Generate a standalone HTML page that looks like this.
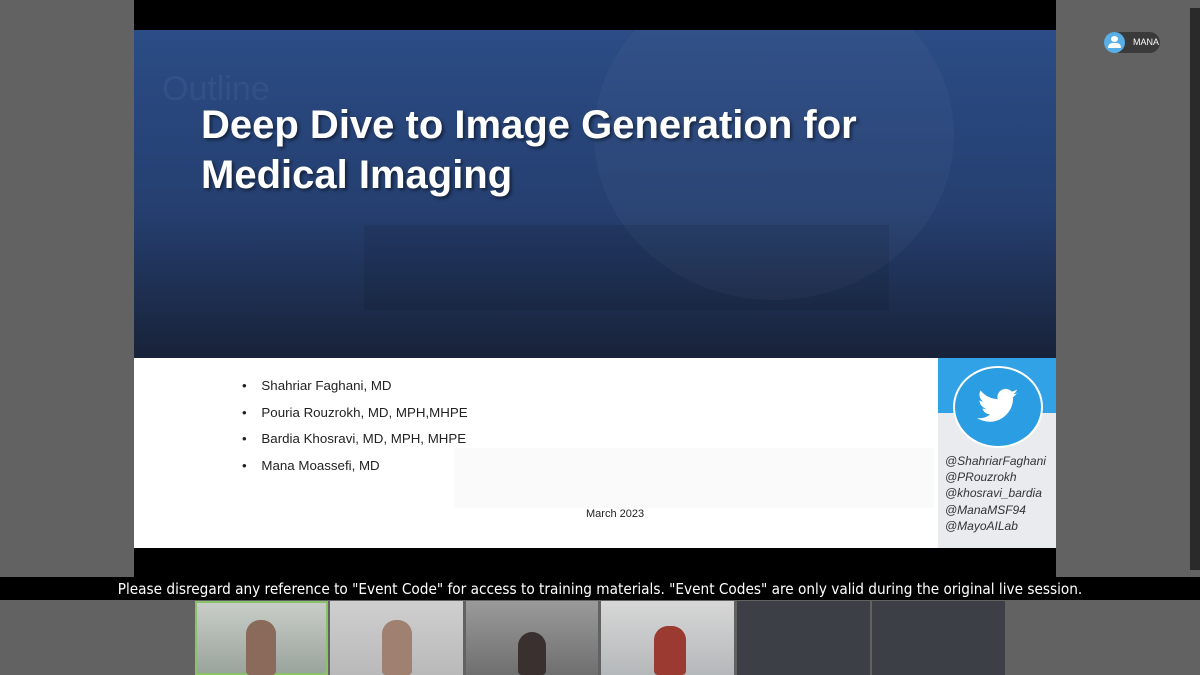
<!DOCTYPE html>
<html><head><meta charset="utf-8"><style>
*{margin:0;padding:0;box-sizing:border-box}
body{width:1200px;height:675px;overflow:hidden;background:#626262;position:relative;font-family:"Liberation Sans",sans-serif}
.abs{position:absolute}
</style></head><body>
<div class="abs" style="left:134px;top:0;width:922px;height:577px;background:#000"></div>
<div class="abs" style="left:1190px;top:8px;width:10px;height:562px;background:#2a2a2a"></div>
<!-- slide top -->
<div class="abs" style="left:134px;top:30px;width:922px;height:328px;background:linear-gradient(180deg,#2b4c86 0%,#253f70 55%,#182238 100%);overflow:hidden">
 <div class="abs" style="left:460px;top:-60px;width:360px;height:330px;border-radius:50%;background:rgba(255,255,255,0.03)"></div>
 <div class="abs" style="left:230px;top:195px;width:525px;height:85px;background:rgba(0,0,0,0.08)"></div>
 <div class="abs" style="left:28px;top:40px;font-size:34px;color:rgba(255,255,255,0.05)">Outline</div>
 <div class="abs" style="left:67px;top:70px;font-size:40px;font-weight:bold;color:#fff;line-height:50px;text-shadow:2px 2px 3px rgba(0,0,0,.5);white-space:nowrap">Deep Dive to Image Generation for<br>Medical Imaging</div>
</div>
<!-- slide bottom -->
<div class="abs" style="left:134px;top:358px;width:804px;height:190px;background:#fff">
 <div class="abs" style="left:320px;top:90px;width:480px;height:60px;background:rgba(0,0,0,0.02)"></div>
 <div class="abs" style="left:108px;top:15px;font-size:13.3px;color:#222;line-height:26.5px">
  <div>•&nbsp;&nbsp;&nbsp;&nbsp;Shahriar Faghani, MD</div>
  <div>•&nbsp;&nbsp;&nbsp;&nbsp;Pouria Rouzrokh, MD, MPH,MHPE</div>
  <div>•&nbsp;&nbsp;&nbsp;&nbsp;Bardia Khosravi, MD, MPH, MHPE</div>
  <div>•&nbsp;&nbsp;&nbsp;&nbsp;Mana Moassefi, MD</div>
 </div>
 <div class="abs" style="left:452px;top:150px;font-size:11px;color:#222">March 2023</div>
</div>
<div class="abs" style="left:938px;top:358px;width:118px;height:190px;background:#e9ebee"></div>
<div class="abs" style="left:938px;top:358px;width:118px;height:55px;background:#31a2e6"></div>
<div class="abs" style="left:953px;top:366px;width:90px;height:82px;border-radius:50%;background:#2a9de3;border:2px solid #fff"></div>
<svg class="abs" style="left:976px;top:388px" width="44" height="38" viewBox="0 0 24 20"><path fill="#fff" d="M23 2.3c-.8.4-1.7.6-2.6.7.9-.6 1.6-1.4 2-2.5-.9.5-1.9.9-2.9 1.1A4.5 4.5 0 0 0 11.8 5.7 12.8 12.8 0 0 1 2.5 1a4.5 4.5 0 0 0 1.4 6c-.7 0-1.4-.2-2-.6 0 2.2 1.6 4 3.6 4.4-.7.2-1.4.2-2 .1.6 1.8 2.2 3.1 4.2 3.1A9 9 0 0 1 .5 16a12.8 12.8 0 0 0 19.7-11.4c.9-.6 1.6-1.4 2.2-2.3z"/></svg>
<div class="abs" style="left:945px;top:453px;font-size:12px;font-style:italic;color:#333;line-height:16.2px">@ShahriarFaghani<br>@PRouzrokh<br>@khosravi_bardia<br>@ManaMSF94<br>@MayoAILab</div>
<!-- name badge -->
<div class="abs" style="left:1104px;top:32px;width:56px;height:21px;border-radius:11px;background:#3a3a3a"></div>
<div class="abs" style="left:1104px;top:32px;width:21px;height:21px;border-radius:50%;background:#5aaee6"></div>
<div class="abs" style="left:1111px;top:36px;width:7px;height:6px;border-radius:50%;background:#fff"></div>
<div class="abs" style="left:1108px;top:43px;width:13px;height:5px;border-radius:6px 6px 1px 1px;background:#fff"></div>
<div class="abs" style="left:1133px;top:37px;font-size:9px;color:#fff">MANA</div>
<!-- caption -->
<div class="abs" style="left:0;top:577px;width:1200px;height:23px;background:#000;color:#fff;font-size:15.2px;text-align:center;line-height:24px;font-family:'DejaVu Sans Condensed','Liberation Sans Narrow',sans-serif;white-space:nowrap">Please disregard any reference to "Event Code" for access to training materials. "Event Codes" are only valid during the original live session.</div>
<!-- tiles -->
<div class="abs" style="left:195px;top:601px;width:133px;height:74px;background:linear-gradient(#c9cdc8,#9aa49c);border:2px solid #8ac26a"></div>
<div class="abs" style="left:330px;top:601px;width:133px;height:74px;background:linear-gradient(#cfcfcf,#b9b9b9)"></div>
<div class="abs" style="left:466px;top:601px;width:132px;height:74px;background:linear-gradient(#9a9a9a,#6f6f6f)"></div>
<div class="abs" style="left:601px;top:601px;width:133px;height:74px;background:linear-gradient(#d7d7d7,#b5b8ba)"></div>
<div class="abs" style="left:737px;top:601px;width:133px;height:74px;background:#3c4046"></div>
<div class="abs" style="left:872px;top:601px;width:133px;height:74px;background:#3c4046"></div>
<div class="abs" style="left:246px;top:620px;width:30px;height:55px;border-radius:14px 14px 4px 4px;background:#8a6a5a"></div>
<div class="abs" style="left:382px;top:620px;width:30px;height:55px;border-radius:14px 14px 4px 4px;background:#a08070"></div>
<div class="abs" style="left:518px;top:632px;width:28px;height:43px;border-radius:14px 14px 4px 4px;background:#3a3030"></div>
<div class="abs" style="left:654px;top:626px;width:32px;height:49px;border-radius:14px 14px 4px 4px;background:#9a3a30"></div>
</body></html>
